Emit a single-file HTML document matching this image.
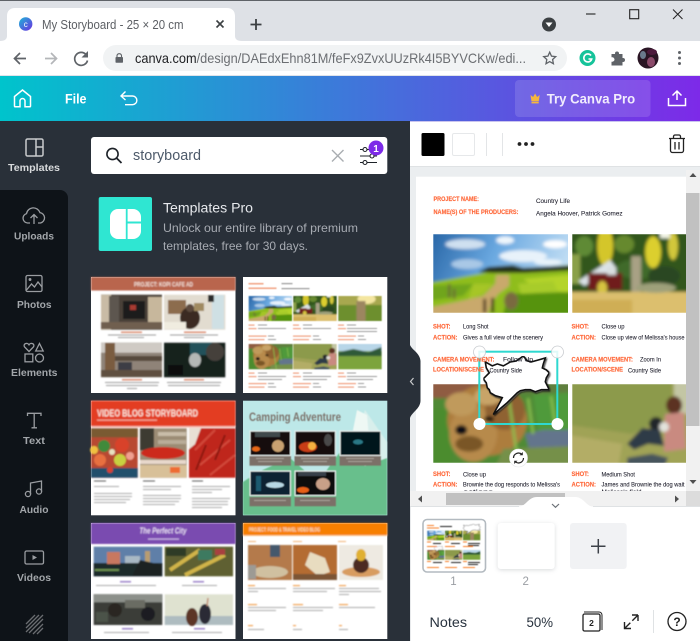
<!DOCTYPE html>
<html><head><meta charset="utf-8"><title>My Storyboard</title>
<style>
html,body{margin:0;padding:0;background:#293039;width:700px;height:641px;overflow:hidden}
svg#r{display:block;filter:blur(.35px)}
text{font-family:"Liberation Sans",sans-serif;white-space:pre}
.n{font-weight:700;font-size:10.5px;fill:#a2a6aa}
.o{font-weight:700;font-size:6.2px;fill:#ff6a3c;stroke:#ff6a3c;stroke-width:.15px}
.k{font-size:6.6px;fill:#1d1d2a;stroke:#1d1d2a;stroke-width:.08px}
</style></head><body>
<svg id="r" xmlns="http://www.w3.org/2000/svg" width="700" height="641" viewBox="0 0 700 641">
<defs>
<linearGradient id="bar" x1="0" x2="1" y1="0" y2="0"><stop offset="0" stop-color="#00c4cc"/><stop offset="1" stop-color="#7d2ae8"/></linearGradient>
<linearGradient id="fav" x1="0" x2="1" y1="0" y2="1"><stop offset="0" stop-color="#1fb6d8"/><stop offset="1" stop-color="#6b2fe0"/></linearGradient>
<linearGradient id="sky" x1="0" x2="1" y1="0" y2=".3"><stop offset="0" stop-color="#1c5a9c"/><stop offset=".5" stop-color="#6aa8e0"/><stop offset="1" stop-color="#c8e2f6"/></linearGradient>
<filter id="b" x="-5%" y="-5%" width="110%" height="110%"><feGaussianBlur stdDeviation="1.7"/></filter>
<filter id="t" x="-5%" y="-5%" width="110%" height="110%"><feGaussianBlur stdDeviation=".7"/></filter>
<filter id="t2" x="-5%" y="-5%" width="110%" height="110%"><feGaussianBlur stdDeviation=".45"/></filter>
<clipPath id="cv"><rect x="416" y="170" width="270" height="321"/></clipPath>

<symbol id="p1" viewBox="0 0 135 79" preserveAspectRatio="none"><g filter="url(#b)">
<rect x="-10" y="-10" width="155" height="99" fill="url(#sky)"/>
<ellipse cx="32" cy="10" rx="20" ry="5" fill="#cfe0f0"/><ellipse cx="72" cy="6" rx="9" ry="4" fill="#eef6fc"/><ellipse cx="90" cy="22" rx="24" ry="6" fill="#e8f2fa"/><ellipse cx="34" cy="30" rx="16" ry="5" fill="#a9c8e6"/><ellipse cx="122" cy="10" rx="12" ry="4" fill="#fff"/><ellipse cx="115" cy="28" rx="14" ry="3" fill="#eaf4fb"/>
<path d="M-10 50 50 39 145 30V89H-10Z" fill="#8fbd1f"/>
<path d="M45 38 55 33 80 31 90 34 145 31V36L90 39H60Z" fill="#25311c"/>
<path d="M90 45 145 40V60L105 55Z" fill="#b4d42c"/><path d="M-10 52 40 50 30 62-10 68Z" fill="#6fa51c"/><path d="M75 60 145 58V89H68Z" fill="#56930f"/><path d="M85 50 120 47 125 58 88 60Z" fill="#a8cc2a"/><path d="M40 50H60L50 60 35 66Z" fill="#a6c628"/>
<path d="M-10 89V75L25 68 50 62 62 50 63 41 76 41 76 52 65 60 58 70 52 89Z" fill="#c9a96c"/>
<ellipse cx="78" cy="67" rx="7" ry="9" fill="#7a6a40"/>
<rect x="50" y="65" width="3" height="14" fill="#46301c"/><rect x="58" y="64" width="3" height="15" fill="#46301c"/><rect x="15" y="50" width="2" height="14" fill="#6d5a3a"/><rect x="20" y="55" width="2" height="10" fill="#6d5a3a"/>
</g></symbol>

<symbol id="p2" viewBox="0 0 114 79" preserveAspectRatio="none"><g filter="url(#b)">
<rect x="-10" y="-10" width="134" height="99" fill="#33561f"/>
<ellipse cx="12" cy="12" rx="9" ry="10" fill="#5f8a36"/><ellipse cx="52" cy="10" rx="10" ry="9" fill="#66892e"/><ellipse cx="66" cy="35" rx="22" ry="10" fill="#3f6a2a"/>
<ellipse cx="33" cy="12" rx="8" ry="20" fill="#d4c62a"/><ellipse cx="81" cy="18" rx="8" ry="16" fill="#dccf2e"/><ellipse cx="101" cy="12" rx="5" ry="14" fill="#d2c73a"/><rect x="88" y="-4" width="10" height="8" fill="#f4f6e8"/>
<rect x="-4" y="20" width="12" height="30" fill="#8aa048"/>
<path d="M6 47 38 26 44 34 12 52Z" fill="#dbe3e8"/>
<rect x="16" y="39" width="34" height="17" fill="#701a1e"/><rect x="35" y="33" width="9" height="8" fill="#d8dee0"/>
<rect x="59" y="22" width="10" height="40" fill="#a8a184"/>
<ellipse cx="30" cy="54" rx="5" ry="7" fill="#d6c440"/><ellipse cx="92" cy="42" rx="16" ry="10" fill="#2a4624"/>
<path d="M-10 58H124V89H-10Z" fill="#dcbf6e"/><path d="M-10 66H60V89H-10Z" fill="#cfae55"/><ellipse cx="84" cy="54" rx="20" ry="5" fill="#9ea07a"/>
</g></symbol>

<symbol id="p3" viewBox="0 0 135 79" preserveAspectRatio="none"><g filter="url(#b)">
<rect x="-10" y="-10" width="155" height="99" fill="#4f8a34"/>
<rect x="-10" y="-10" width="75" height="24" fill="#8f5b43"/><rect x="60" y="-10" width="85" height="20" fill="#5f7f3c"/><path d="M100 10 145 8V48H105Z" fill="#4f9a3a"/><path d="M-10 25H18V89H-10Z" fill="#4c8c2e"/>
<ellipse cx="54" cy="36" rx="40" ry="36" fill="#ad7d3e"/><ellipse cx="40" cy="50" rx="24" ry="28" fill="#b78a4c"/><ellipse cx="72" cy="26" rx="20" ry="20" fill="#8f6230"/><ellipse cx="28" cy="20" rx="16" ry="12" fill="#c09a5c"/><ellipse cx="55" cy="12" rx="14" ry="9" fill="#c8a468"/>
<ellipse cx="56" cy="35" rx="5" ry="3" fill="#2a1c10"/>
<ellipse cx="28" cy="46" rx="6" ry="5" fill="#101116"/><ellipse cx="36" cy="60" rx="14" ry="8" fill="#7a5628"/>
<path d="M92 50 110 46 145 46V72H98Z" fill="#64748c"/><path d="M70 65 145 62V89H60Z" fill="#74904a"/>
<path d="M75 10 85 79M95 14 100 50M118 12 122 40" stroke="#8ac050" stroke-width="2.500"/>
</g></symbol>

<symbol id="p4" viewBox="0 0 114 79" preserveAspectRatio="none"><g filter="url(#b)">
<rect x="-10" y="-10" width="134" height="99" fill="#a0a357"/>
<path d="M-10-10H100V30L60 50-10 40Z" fill="#8c9a4c"/><path d="M-10 50 50 60 45 89H-10Z" fill="#b3ad66"/><rect x="102" y="-10" width="22" height="40" fill="#c3c6a4"/>
<ellipse cx="102" cy="21" rx="8" ry="9" fill="#5c3324"/>
<path d="M93 30 112 28 114 65 92 68Z" fill="#c98a80"/>
<ellipse cx="84" cy="40" rx="7" ry="7" fill="#24262b"/><ellipse cx="92" cy="43" rx="5" ry="5" fill="#e2e2dc"/>
<path d="M55 60 70 44 88 46 92 62 76 60 62 66Z" fill="#2e3a46"/><path d="M55 74 80 70 96 74 90 89H55Z" fill="#46545c"/>
</g></symbol>

<symbol id="p5" viewBox="0 0 43 25" preserveAspectRatio="none"><g filter="url(#t)"><rect x="-4" y="-4" width="51" height="33" fill="#6d8f2f"/><rect x="-4" y="-4" width="51" height="13" fill="#a8a850"/><ellipse cx="28" cy="3" rx="9" ry="5" fill="#f4e6a0"/><rect x="18" y="5" width="9" height="20" fill="#9c8660"/></g></symbol>
<symbol id="p6" viewBox="0 0 43 25" preserveAspectRatio="none"><g filter="url(#t)"><rect x="-4" y="-4" width="51" height="33" fill="#7ba43e"/><rect x="-4" y="-4" width="51" height="11" fill="#b8d6e8"/><path d="M0 8 15 5 30 8 43 3V12H0Z" fill="#2e5a38"/></g></symbol>

<symbol id="bub" viewBox="0 0 66 60" preserveAspectRatio="none"><path d="M2 6 9 10 14 8 20 10 27 6 33 5 40 0 44 5 48 6 55 4 62 2 60 8 59 12 63 14 66 17 63 22 62 26 64 30 66 34 58 34 52 36 47 34 42 34 37 35 34 37 28 43 24 47 10 59 17 46 19 42 12 40 7 37 6 34 4 32 3 27 0 23 3 20 6 17 3 12Z" fill="#fff" stroke="#111" stroke-width="1.600"/></symbol>
</defs>

<!-- chrome -->
<rect width="700" height="76" fill="#fff"/>
<rect width="700" height="41" fill="#dee1e6"/>
<rect width="700" height="1" fill="#5f6368"/>
<path d="M0 41C5 41 7 39 7 36V16C7 11 10 8 15 8H227C232 8 235 11 235 16V36C235 39 237 41 242 41Z" fill="#fff"/>
<circle cx="25.700" cy="24" r="6.700" fill="url(#fav)"/>
<text x="25.700" y="27" font-size="8" fill="#fff" text-anchor="middle">c</text>
<text x="42" y="29" font-size="12.500" fill="#5c5f64" textLength="141.500" lengthAdjust="spacingAndGlyphs">My Storyboard - 25 × 20 cm</text>
<path d="M216.500 20.500l7 7m0-7l-7 7" stroke="#3c4043" stroke-width="1.600" fill="none"/>
<path d="M256 19v11M250.500 24.500h11" stroke="#3c4043" stroke-width="1.800" fill="none"/>
<path d="M586 14h9.500" stroke="#222" stroke-width="1.100"/>
<rect x="629.700" y="9.700" width="9" height="9" fill="none" stroke="#222" stroke-width="1.100"/>
<path d="M673 9.500l9.500 9.500m0-9.500L673 19" stroke="#222" stroke-width="1"/>
<circle cx="549" cy="24.500" r="7" fill="#3c4043"/><path d="M545.500 22.500h7l-3.500 4.500z" fill="#fff"/>

<path d="M26 58.500H15M20 53l-5.500 5.500L20 64" stroke="#5f6368" stroke-width="1.700" fill="none"/>
<path d="M45 58.500h11M51 53l5.500 5.500L51 64" stroke="#b4b6b9" stroke-width="1.700" fill="none"/>
<path d="M86 54.500a6.500 6.500 0 1 0 1.500 6" stroke="#5f6368" stroke-width="1.700" fill="none"/><path d="M88 51v6.500h-6.500z" fill="#5f6368"/>
<rect x="103" y="45" width="464" height="26" rx="13" fill="#f1f3f4"/>
<rect x="115.500" y="57" width="7.500" height="5.800" rx=".8" fill="#5f6368"/><path d="M117 57v-1.500a2.300 2.300 0 0 1 4.500 0V57" stroke="#5f6368" stroke-width="1.100" fill="none"/>
<text x="135" y="63" font-size="14" fill="#6b6e72" textLength="391" lengthAdjust="spacingAndGlyphs"><tspan fill="#202124">canva.com</tspan>/design/DAEdxEhn81M/feFx9ZvxUUzRk4I5BYVCKw/edi...</text>
<path d="M549.700 52.200l1.800 3.900 4.200.5-3.100 2.900.8 4.200-3.700-2.100-3.700 2.100.8-4.200-3.100-2.900 4.200-.5z" fill="none" stroke="#5f6368" stroke-width="1.300"/>
<circle cx="587.500" cy="58" r="8" fill="#15c39a"/>
<path d="M591 55.500a4 4 0 1 0 .7 3.500h-3.200" stroke="#fff" stroke-width="1.600" fill="none"/>
<path d="M611.500 54h3.500v-.5a2 2 0 0 1 4 0v.5h3.500v4h.5a2 2 0 0 1 0 4h-.5v3.500h-11v-3.800h.8a2.200 2.200 0 0 0 0-4.400h-.8z" fill="#5f6368"/>
<circle cx="648" cy="58" r="10.500" fill="#2a1524"/><ellipse cx="651" cy="62" rx="4" ry="5" fill="#8b4a6a"/><ellipse cx="643" cy="55" rx="3" ry="4" fill="#6a7a8c"/><ellipse cx="652" cy="52" rx="5" ry="3" fill="#4c1a3c"/>
<circle cx="679.500" cy="52.500" r="1.500" fill="#5f6368"/><circle cx="679.500" cy="58" r="1.500" fill="#5f6368"/><circle cx="679.500" cy="63.500" r="1.500" fill="#5f6368"/>

<!-- canva top bar -->
<rect y="75" width="700" height="1" fill="#dfe3ea"/>
<rect y="76" width="700" height="45" fill="url(#bar)"/>
<path d="M14.500 106v-9.500L22.500 90l8 6.500V106a.8.8 0 0 1-.8.8h-4.700V101a2.500 2.500 0 0 0-5 0v5.800h-4.700a.8.800 0 0 1-.8-.8z" fill="none" stroke="#fff" stroke-width="1.500"/>
<text x="65" y="103.500" font-size="13.500" font-weight="700" fill="#fff" textLength="21.500" lengthAdjust="spacingAndGlyphs">File</text>
<path d="M121 96h11.500a4.300 4.300 0 0 1 0 8.700H125M125.500 91.500L121 96l4.500 4" fill="none" stroke="#fff" stroke-width="1.400"/>
<rect x="515" y="80" width="135.500" height="37" rx="4" fill="#fff" fill-opacity=".13"/>
<path d="M530.500 95l2.600 2 2-3.500 2 3.500 2.600-2-1 6.500h-7.200z" fill="#f6b73c"/><rect x="531.500" y="102" width="7.200" height="1.400" fill="#f6b73c"/>
<text x="546.700" y="103.500" font-size="13.800" font-weight="700" fill="#f1ecfd" textLength="88.500" lengthAdjust="spacingAndGlyphs">Try Canva Pro</text>
<path d="M668.500 98v7.500h17V98M677 100V91M672.500 95.500l4.500-4.500 4.500 4.500" fill="none" stroke="#fff" stroke-width="1.500"/>

<!-- left panel -->
<rect y="121" width="410" height="520" fill="#293039"/>
<path d="M0 190H60a8 8 0 0 1 8 8V641H0Z" fill="#0e1318"/>
<g fill="none" stroke="#c9cbcd" stroke-width="1.500"><rect x="26" y="139" width="17" height="17" rx="1.500"/><path d="M36 139v17M36 147h7"/></g>
<text class="n" x="8" y="171" style="fill:#d8dadc" textLength="52" lengthAdjust="spacingAndGlyphs">Templates</text>
<path d="M30 223h-2.500a4.800 4.800 0 0 1-1-9.400 7 7 0 0 1 13.500-1 5.300 5.300 0 0 1 .5 10.400H38M34 224v-9M30.500 218l3.500-3.500 3.500 3.500" fill="none" stroke="#9a9da1" stroke-width="1.300"/>
<text class="n" x="14" y="239.500" textLength="40" lengthAdjust="spacingAndGlyphs">Uploads</text>
<g fill="none" stroke="#9a9da1" stroke-width="1.300"><rect x="26" y="275.500" width="16" height="16" rx="1.500"/><path d="M26.500 290l5-6 3 3 3.500-5 4 5"/><circle cx="30" cy="279.500" r=".8" fill="#9a9da1"/></g>
<text class="n" x="17" y="308" textLength="34.500" lengthAdjust="spacingAndGlyphs">Photos</text>
<g fill="none" stroke="#9a9da1" stroke-width="1.300"><path d="M29 351.500l-4.500-4.700c-1.800-2.800 2.800-5 4.500-2 1.700-3 6.300-.8 4.500 2z"/><path d="M39.500 343.500l3.700 7.500h-7.500z"/><rect x="25" y="354" width="7.800" height="7.800"/><circle cx="39.500" cy="358" r="4"/></g>
<text class="n" x="11" y="376" textLength="46.500" lengthAdjust="spacingAndGlyphs">Elements</text>
<path d="M27.500 416v-2.700h13.500v2.700M34.200 413.300v14.500M31.500 427.800h5.500" fill="none" stroke="#9a9da1" stroke-width="1.300"/>
<text class="n" x="23" y="444" textLength="22" lengthAdjust="spacingAndGlyphs">Text</text>
<g fill="none" stroke="#9a9da1" stroke-width="1.300"><circle cx="28" cy="494" r="2.600"/><circle cx="39" cy="491.500" r="2.600"/><path d="M30.500 494v-11l11-2v10.500"/></g>
<text class="n" x="19.500" y="513" textLength="29" lengthAdjust="spacingAndGlyphs">Audio</text>
<rect x="25" y="551" width="18.500" height="13" rx="1.500" fill="none" stroke="#9a9da1" stroke-width="1.300"/><path d="M32.500 555l4.500 2.500-4.500 2.500z" fill="#9a9da1"/>
<text class="n" x="17" y="581" textLength="34" lengthAdjust="spacingAndGlyphs">Videos</text>
<path d="M26 624l9-9M26 628l13-13M26 632l17-17M29 633l14-14M33 634l10-10M37 634l6-6" stroke="#6a6d71" stroke-width="1.300" fill="none"/>

<rect x="91" y="137" width="296.300" height="37" rx="3" fill="#fff"/>
<circle cx="112.500" cy="154" r="5.600" fill="none" stroke="#1d2228" stroke-width="1.600"/><path d="M116.500 158l5 5" stroke="#1d2228" stroke-width="1.800"/>
<text x="133" y="160" font-size="14.500" fill="#4d5a6a" textLength="68" lengthAdjust="spacingAndGlyphs">storyboard</text>
<path d="M332 150l11.500 11.500m0-11.500L332 161.500" stroke="#a9adb1" stroke-width="1.400" fill="none"/>
<g stroke="#1d2228" stroke-width="1.100" fill="none"><path d="M360 149.500h17M360 156h17M360 162.500h17"/><circle cx="365" cy="149.500" r="2" fill="#fff"/><circle cx="372" cy="156" r="2" fill="#fff"/><circle cx="365" cy="162.500" r="2" fill="#fff"/></g>
<circle cx="376" cy="148" r="7.500" fill="#7d2ae8"/><text x="376" y="151.800" font-size="10" font-weight="700" fill="#fff" text-anchor="middle">1</text>

<rect x="98.700" y="197" width="53.300" height="54" rx="2" fill="#2fe6d2"/>
<rect x="110" y="209" width="31" height="30" rx="8" fill="#fff"/><path d="M126.700 209v30" stroke="#2fe6d2" stroke-width="1.800"/><path d="M126.700 222.500H141" stroke="#2fe6d2" stroke-width="2"/>
<text x="163" y="212.500" font-size="14" fill="#e6e8ec" textLength="90" lengthAdjust="spacingAndGlyphs">Templates Pro</text>
<text x="163" y="232" font-size="12" fill="#a7abb2" textLength="195" lengthAdjust="spacingAndGlyphs">Unlock our entire library of premium</text>
<text x="163" y="250" font-size="12" fill="#a7abb2" textLength="145" lengthAdjust="spacingAndGlyphs">templates, free for 30 days.</text>

<!-- T1 -->
<rect x="91" y="277" width="144.500" height="116" fill="#fff"/>
<g filter="url(#t)">
<rect x="91" y="277" width="144.500" height="13.500" fill="#b9654d"/>
<text x="134" y="286.300" font-size="6" font-weight="700" fill="#f4e2da" textLength="59" lengthAdjust="spacingAndGlyphs">PROJECT: KOPI CAFE AD</text>
<rect x="101" y="294.700" width="61" height="35" fill="#4a4038"/><rect x="101" y="294.700" width="10" height="35" fill="#c9bba5"/><rect x="109" y="296" width="10" height="30" fill="#5d5650"/><rect x="123" y="301" width="22" height="18" fill="#1c1a1c"/><rect x="130" y="305" width="6" height="5" fill="#a83a30"/><rect x="148" y="297" width="14" height="30" fill="#c7b79c"/>
<rect x="101" y="322" width="61" height="7" fill="#6f5f50"/>
<rect x="164" y="294.700" width="61.300" height="35" fill="#e2dcd0"/><rect x="168" y="300" width="18" height="14" fill="#8c6c4e"/><ellipse cx="190" cy="318" rx="10" ry="11" fill="#3a2a20"/><ellipse cx="190" cy="308" rx="4" ry="4" fill="#5c4a3e"/><rect x="212" y="295" width="12" height="34" fill="#cfe0e4"/><rect x="164" y="322" width="22" height="7" fill="#f0ece0"/><path d="M208 295h6v7h-6z" fill="#2a2a2a"/><rect x="194" y="303" width="10" height="8" fill="#a08a60"/>
<rect x="101" y="342.700" width="61" height="34.600" fill="#8f8378"/><rect x="101" y="342.700" width="61" height="10" fill="#cfcac4"/><rect x="105" y="343" width="10" height="34" fill="#7a5c40"/><rect x="115" y="356" width="47" height="5" fill="#56483e"/><rect x="118" y="362" width="14" height="15" fill="#3e3e44"/><rect x="101" y="370" width="61" height="7" fill="#5f4f40"/>
<rect x="164" y="342.700" width="61.300" height="34.600" fill="#16201e"/><rect x="190" y="343" width="22" height="12" fill="#21515a"/><ellipse cx="195" cy="360" rx="6" ry="7" fill="#b4b8b6"/><ellipse cx="215" cy="352" rx="9" ry="9" fill="#44403a"/><rect x="168" y="365" width="15" height="10" fill="#0c0f10"/>
<g fill="#d98a70"><rect x="121" y="331.500" width="21" height="1.500"/><rect x="184" y="331.500" width="22" height="1.500"/><rect x="122" y="379" width="20" height="1.500"/><rect x="184" y="379" width="20" height="1.500"/></g>
<g fill="#9a9a9a"><rect x="108" y="334.500" width="48" height="1"/><rect x="118" y="337" width="26" height="1"/><rect x="170" y="334.500" width="48" height="1"/><rect x="184" y="337" width="20" height="1"/><rect x="105" y="382" width="54" height="1"/><rect x="106" y="385" width="52" height="1"/><rect x="127" y="388" width="10" height="1"/><rect x="167" y="382" width="54" height="1"/><rect x="168" y="385" width="52" height="1"/></g>
</g>

<!-- T2 -->
<rect x="243" y="277" width="144.300" height="116" fill="#fff"/>
<g filter="url(#t2)">
<rect x="248.500" y="283" width="15" height="1.500" fill="#f0a080"/><rect x="248.500" y="287.500" width="28" height="1.500" fill="#f0a080"/><rect x="281.500" y="283" width="11" height="1.200" fill="#999"/><rect x="281.500" y="288" width="28" height="1.200" fill="#999"/>
<use href="#p1" x="248.700" y="296" width="43.300" height="25"/><use href="#p2" x="293.300" y="296" width="43.400" height="25"/><use href="#p5" x="338.300" y="296" width="43.400" height="25"/>
<use href="#p3" x="248.700" y="344" width="44" height="25.300"/><use href="#p4" x="293.300" y="344" width="43.400" height="25.300"/><use href="#p6" x="338.300" y="344" width="43.400" height="25.300"/>
<g fill="#f0a080"><rect x="248.500" y="324.500" width="6" height="1.200"/><rect x="248.500" y="328" width="8" height="1.200"/><rect x="248.500" y="335.500" width="18" height="1.200"/><rect x="248.500" y="339" width="16" height="1.200"/><rect x="293" y="324.500" width="6" height="1.200"/><rect x="293" y="328" width="8" height="1.200"/><rect x="293" y="335.500" width="18" height="1.200"/><rect x="293" y="339" width="16" height="1.200"/><rect x="338" y="324.500" width="6" height="1.200"/><rect x="338" y="328" width="8" height="1.200"/><rect x="338" y="335.500" width="18" height="1.200"/><rect x="338" y="339" width="16" height="1.200"/>
<rect x="248.500" y="372.500" width="6" height="1.200"/><rect x="248.500" y="376" width="8" height="1.200"/><rect x="248.500" y="383" width="18" height="1.200"/><rect x="248.500" y="386.500" width="16" height="1.200"/><rect x="293" y="372.500" width="6" height="1.200"/><rect x="293" y="376" width="8" height="1.200"/><rect x="293" y="383" width="18" height="1.200"/><rect x="293" y="386.500" width="16" height="1.200"/><rect x="338" y="372.500" width="6" height="1.200"/><rect x="338" y="376" width="8" height="1.200"/><rect x="338" y="383" width="18" height="1.200"/><rect x="338" y="386.500" width="16" height="1.200"/></g>
<g fill="#9c9c9c"><rect x="258" y="324.500" width="9" height="1"/><rect x="258" y="328" width="28" height="1"/><rect x="268" y="335.500" width="6" height="1"/><rect x="268" y="339" width="8" height="1"/><rect x="303" y="324.500" width="9" height="1"/><rect x="303" y="328" width="28" height="1"/><rect x="313" y="335.500" width="6" height="1"/><rect x="313" y="339" width="8" height="1"/><rect x="347" y="324.500" width="9" height="1"/><rect x="347" y="328" width="30" height="1"/><rect x="347" y="331" width="30" height="1"/><rect x="358" y="335.500" width="6" height="1"/><rect x="358" y="339" width="8" height="1"/>
<rect x="258" y="372.500" width="9" height="1"/><rect x="258" y="376" width="28" height="1"/><rect x="258" y="379" width="24" height="1"/><rect x="268" y="383" width="6" height="1"/><rect x="268" y="386.500" width="8" height="1"/><rect x="303" y="372.500" width="9" height="1"/><rect x="303" y="376" width="28" height="1"/><rect x="303" y="379" width="24" height="1"/><rect x="313" y="383" width="6" height="1"/><rect x="313" y="386.500" width="8" height="1"/><rect x="347" y="372.500" width="9" height="1"/><rect x="347" y="376" width="30" height="1"/><rect x="347" y="379" width="26" height="1"/><rect x="358" y="383" width="6" height="1"/><rect x="358" y="386.500" width="8" height="1"/></g>
</g>

<!-- T3 -->
<rect x="91" y="400.700" width="144.500" height="114.600" fill="#fff"/>
<g filter="url(#t)">
<rect x="91" y="400.700" width="144.500" height="25.300" fill="#e33c24"/><rect x="91" y="426" width="144.500" height="1.500" fill="#f5b5a8"/>
<text x="97" y="416.500" font-size="10.500" font-weight="700" fill="#fbe6dc" textLength="101" lengthAdjust="spacingAndGlyphs">VIDEO BLOG STORYBOARD</text>
<rect x="97" y="419.500" width="60" height="1.300" fill="#f2a898"/>
<rect x="91" y="428.300" width="46.700" height="49.400" fill="#b84830"/><rect x="91" y="428.300" width="46.700" height="9" fill="#7a5a30"/><circle cx="104" cy="446" r="6" fill="#3f8a3a"/><circle cx="122" cy="445" r="7" fill="#d8422c"/><circle cx="100" cy="460" r="6" fill="#e87040"/><circle cx="120" cy="460" r="6" fill="#c8d040"/><rect x="91" y="468" width="46.700" height="9.700" fill="#24506c"/><circle cx="130" cy="456" r="4" fill="#f0a090"/><circle cx="94" cy="450" r="4" fill="#f0c040"/><circle cx="112" cy="452" r="3" fill="#e8e0c0"/><circle cx="110" cy="470" r="3" fill="#d84030"/>
<rect x="140" y="428.300" width="46.700" height="49.400" fill="#9c8c74"/><rect x="140" y="428.300" width="14" height="22" fill="#3d3a30"/><rect x="158" y="432" width="28" height="4" fill="#c8bca8"/><rect x="158" y="440" width="28" height="4" fill="#b8ac98"/><ellipse cx="163" cy="453" rx="22" ry="6" fill="#cc2c1c"/><rect x="140" y="460" width="46" height="4" fill="#e8d8cc"/><rect x="140" y="465" width="46.700" height="12.700" fill="#d8c098"/><rect x="170" y="467" width="10" height="6" fill="#ee6c30"/>
<rect x="189" y="428.300" width="46.500" height="49.400" fill="#bf281e"/><path d="M189 428.300h12l-6 16-6 5z" fill="#e8e0d4"/><path d="M195 450 215 430M200 465 230 440M210 475 235 455" stroke="#d24a3a" stroke-width="2" fill="none"/><path d="M196 470 206 445M215 460 225 435" stroke="#8c1410" stroke-width="2"/>
<g fill="#555"><rect x="94" y="480.500" width="12" height="1"/><rect x="143" y="480.500" width="12" height="1"/><rect x="192" y="480.500" width="11" height="1"/></g>
<g fill="#a8a8a8"><rect x="94" y="486" width="25" height="1"/><rect x="94" y="493" width="38" height="1"/><rect x="94" y="496" width="38" height="1"/><rect x="94" y="499" width="36" height="1"/><rect x="94" y="502" width="32" height="1"/><rect x="143" y="486" width="38" height="1"/><rect x="143" y="489" width="28" height="1"/><rect x="143" y="495" width="38" height="1"/><rect x="143" y="498" width="38" height="1"/><rect x="143" y="501" width="36" height="1"/><rect x="143" y="504" width="32" height="1"/><rect x="192" y="486" width="38" height="1"/><rect x="192" y="489" width="30" height="1"/><rect x="192" y="492" width="20" height="1"/><rect x="192" y="498" width="38" height="1"/><rect x="192" y="501" width="36" height="1"/><rect x="192" y="504" width="36" height="1"/><rect x="192" y="507" width="30" height="1"/></g>
</g>

<!-- T4 -->
<rect x="243" y="400.700" width="144.300" height="114.600" fill="#bde8e8"/>
<g filter="url(#t2)">
<path d="M345 470 365 410 387 442V470Z" fill="#d8efec"/>
<path d="M345 470 357 410 367 415 372 472Z" fill="#eef8f4"/>
<path d="M243 515V482L258 472 290 458 318 482 340 452 365 466 387 458V515H243Z" fill="#68bf8c"/>
<text x="249" y="421" font-size="11.500" font-weight="700" fill="#7c736c" textLength="92" lengthAdjust="spacingAndGlyphs">Camping Adventure</text>
<g fill="#e8f0ee"><rect x="249.500" y="430.500" width="41.500" height="25.500"/><rect x="294.500" y="430.500" width="41.500" height="25.500"/><rect x="339.500" y="430.500" width="41.500" height="25.500"/><rect x="249.500" y="470.500" width="41.500" height="25.500"/><rect x="294.500" y="470.500" width="41.500" height="25.500"/></g>
<rect x="250.500" y="431.700" width="39.500" height="23.300" fill="#14100e"/><ellipse cx="278" cy="446" rx="6" ry="6" fill="#c8a070"/><ellipse cx="256" cy="449" rx="4" ry="2.500" fill="#e86818"/><rect x="255" y="432" width="25" height="5" fill="#40484c"/>
<rect x="295.500" y="431.700" width="39.500" height="23.300" fill="#18100e"/><ellipse cx="308" cy="447" rx="9" ry="5" fill="#c83c14"/><ellipse cx="312" cy="446" rx="4" ry="4" fill="#f4b040"/><ellipse cx="328" cy="440" rx="4" ry="6" fill="#484848"/>
<rect x="340.700" y="431.700" width="39.500" height="23.300" fill="#06141a"/><ellipse cx="358" cy="442" rx="5" ry="2.500" fill="#2c7886"/>
<rect x="250.500" y="471.700" width="39.500" height="23.300" fill="#0a2430"/><ellipse cx="275" cy="485" rx="9" ry="3" fill="#b8d8e4"/><rect x="256" y="476" width="5" height="15" fill="#1c5a70"/>
<rect x="295.500" y="471.700" width="39.500" height="23.300" fill="#100c0e"/><ellipse cx="303" cy="490" rx="6" ry="3" fill="#e86018"/><ellipse cx="323" cy="484" rx="7" ry="6" fill="#c8a088"/><rect x="298" y="472" width="28" height="4" fill="#38404a"/>
<g fill="#7b6f68"><rect x="249.500" y="456" width="41.500" height="9.700"/><rect x="294.500" y="456" width="41.500" height="9.700"/><rect x="339.500" y="456" width="41.500" height="9.700"/><rect x="249.500" y="497" width="41.500" height="9.300"/><rect x="294.500" y="497" width="41.500" height="9.300"/></g>
<g fill="#a8a09a"><rect x="256" y="458" width="28" height="1"/><rect x="258" y="461" width="24" height="1"/><rect x="301" y="458" width="28" height="1"/><rect x="303" y="461" width="24" height="1"/><rect x="346" y="458" width="28" height="1"/><rect x="348" y="461" width="24" height="1"/><rect x="254" y="500" width="32" height="1"/><rect x="300" y="500" width="30" height="1"/></g>
</g>

<!-- T5 -->
<rect x="91" y="523" width="144.500" height="116" fill="#fff"/>
<g filter="url(#t)">
<rect x="91" y="523" width="144.500" height="21" fill="#7a4cb0"/>
<text x="163" y="533.500" font-size="8" font-style="italic" font-weight="700" fill="#e8dcf4" text-anchor="middle" textLength="47" lengthAdjust="spacingAndGlyphs">The Perfect City</text>
<rect x="148" y="538.500" width="31" height="1.200" fill="#cdb8e6"/>
<rect x="93.700" y="546.700" width="68.600" height="29.600" fill="#5f7fa8"/><rect x="93.700" y="563" width="68.600" height="13.300" fill="#1c2a2c"/><rect x="107" y="552" width="13" height="12" fill="#c87860"/><rect x="145" y="551" width="5" height="13" fill="#b89c70"/><rect x="125" y="556" width="15" height="7" fill="#a8b8c4"/><path d="M95 570h24" stroke="#6c9050" stroke-width="2"/><path d="M140 560l22 5v11h-30z" fill="#1a2220"/>
<rect x="164.700" y="546.700" width="68.300" height="29.600" fill="#5f6030"/><path d="M170 570 200 550M185 575 225 555" stroke="#d0b448" stroke-width="4"/><rect x="198" y="550" width="14" height="10" fill="#3c7a60"/><rect x="215" y="549" width="10" height="6" fill="#a84040"/><rect x="166" y="548" width="20" height="8" fill="#2e3a28"/>
<rect x="93.700" y="594.300" width="68.600" height="30.700" fill="#3a3c38"/><rect x="93.700" y="594.300" width="68.600" height="8" fill="#8c908a"/><circle cx="148" cy="614" r="7" fill="#1a1c20"/><circle cx="115" cy="610" r="7" fill="#2a2824"/><rect x="125" y="600" width="20" height="8" fill="#6a6c64"/><rect x="96" y="612" width="12" height="10" fill="#4c5248"/>
<rect x="164.700" y="594.300" width="68.300" height="30.700" fill="#dfe2d0"/><rect x="164.700" y="616" width="68.300" height="9" fill="#aebcc0"/><ellipse cx="192" cy="617" rx="6" ry="9" fill="#5c3428"/><ellipse cx="205" cy="614" rx="6" ry="10" fill="#2c2a34"/><path d="M207 606l1-8" stroke="#c08a70" stroke-width="1.500"/>
<g fill="#9a80c8"><rect x="120" y="581" width="11" height="1.500"/><rect x="193" y="581" width="11" height="1.500"/><rect x="122" y="628" width="11" height="1.500"/><rect x="194" y="628" width="11" height="1.500"/></g>
<g fill="#a8a8a8"><rect x="96" y="585" width="60" height="1"/><rect x="182" y="585" width="35" height="1"/><rect x="104" y="632" width="45" height="1"/><rect x="172" y="632" width="50" height="1"/></g>
</g>

<!-- T6 -->
<rect x="243" y="523" width="144.300" height="116" fill="#fff"/>
<g filter="url(#t)">
<rect x="243" y="523" width="144.300" height="12" fill="#f77f00"/><rect x="243" y="535" width="144.300" height="1" fill="#f8c488"/>
<text x="249" y="531.500" font-size="5" font-weight="700" fill="#fbe6cc" textLength="71" lengthAdjust="spacingAndGlyphs">PROJECT: FOOD &amp; TRAVEL VIDEO BLOG</text>
<rect x="248" y="541" width="8" height="1" fill="#f0b070"/><rect x="293" y="541" width="9" height="1" fill="#f0b070"/><rect x="338" y="541" width="8" height="1" fill="#f0b070"/>
<rect x="248" y="545" width="44" height="35" fill="#b47a4c"/><ellipse cx="270" cy="572" rx="18" ry="6" fill="#d0c0a0"/><rect x="270" y="545" width="10" height="12" fill="#44586c"/><rect x="248" y="565" width="8" height="14" fill="#9c9a94"/>
<rect x="293" y="545" width="44" height="35" fill="#b46c30"/><path d="M310 552 325 558 330 572 318 576 305 565Z" fill="#e8dcc0"/><rect x="293" y="574" width="44" height="6" fill="#7c5434"/>
<rect x="339" y="545" width="44" height="35" fill="#eeeae2"/><ellipse cx="361" cy="572" rx="19" ry="5" fill="#d89c60"/><ellipse cx="361" cy="565" rx="8" ry="8" fill="#4c2c20"/><ellipse cx="361" cy="555" rx="5" ry="6" fill="#e0b030"/>
<g fill="#f0a050"><rect x="248" y="585" width="7" height="1.200"/><rect x="293" y="585" width="7" height="1.200"/><rect x="339" y="585" width="7" height="1.200"/><rect x="248" y="604" width="9" height="1.200"/><rect x="293" y="604" width="10" height="1.200"/><rect x="339" y="604" width="9" height="1.200"/><rect x="248" y="625" width="5" height="1.200"/><rect x="293" y="625" width="3" height="1.200"/><rect x="339" y="625" width="3" height="1.200"/></g>
<g fill="#a8a8a8"><rect x="248" y="588" width="38" height="1"/><rect x="248" y="591" width="10" height="1"/><rect x="293" y="588" width="42" height="1"/><rect x="293" y="591" width="34" height="1"/><rect x="339" y="588" width="40" height="1"/><rect x="339" y="591" width="42" height="1"/><rect x="339" y="594" width="10" height="1"/><rect x="248" y="607" width="38" height="1"/><rect x="248" y="610" width="28" height="1"/><rect x="293" y="607" width="40" height="1"/><rect x="293" y="610" width="30" height="1"/><rect x="339" y="607" width="36" height="1"/><rect x="248" y="629" width="16" height="1"/><rect x="293" y="629" width="9" height="1"/><rect x="339" y="629" width="9" height="1"/></g>
</g>

<!-- right panel -->
<rect x="410" y="121" width="290" height="520" fill="#fff"/>
<rect x="410" y="121" width="290" height="1" fill="#c9c4ef"/>
<rect x="421.500" y="133" width="23" height="23" rx="1.500" fill="#000"/>
<rect x="452.500" y="133.500" width="22" height="22" rx="1.500" fill="#fff" stroke="#e6e8ea"/>
<path d="M486.500 133v23M502.500 133v23" stroke="#e3e5e7"/>
<circle cx="519.500" cy="144" r="1.900" fill="#222"/><circle cx="526" cy="144" r="1.900" fill="#222"/><circle cx="532.500" cy="144" r="1.900" fill="#222"/>
<path d="M669 138.500h16M673.500 138.500v-2a1.500 1.500 0 0 1 1.500-1.500h4a1.500 1.500 0 0 1 1.500 1.500v2M670.500 138.500v12a2 2 0 0 0 2 2h9a2 2 0 0 0 2-2v-12M675 142v7.500M679 142v7.500" fill="none" stroke="#222" stroke-width="1.300"/>
<rect x="410" y="166" width="290" height="341" fill="#ebeef0"/>
<rect x="410" y="166" width="290" height="1" fill="#dfe2e4"/>
<g clip-path="url(#cv)">
<rect x="416" y="176.700" width="270" height="340" fill="#fff"/>
<use href="#p1" x="433.300" y="234.300" width="134.700" height="78.400"/>
<use href="#p2" x="572.300" y="234.300" width="113.700" height="78.400"/>
<use href="#p3" x="433.300" y="384.300" width="134.700" height="78.400"/>
<use href="#p4" x="572.300" y="384.300" width="113.700" height="78.400"/>
</g>
<rect x="479.300" y="351.700" width="78" height="72.300" fill="none" stroke="#2fd8d0" stroke-width="2"/>
<use href="#bub" x="483.300" y="356" width="66" height="59.500" transform="translate(1 1.200)" opacity=".85" style="filter:blur(.7px)"/>
<use href="#bub" x="483.300" y="356" width="66" height="59.500"/>
<g clip-path="url(#cv)">
<text class="o" x="433.500" y="201.200" textLength="45.500" lengthAdjust="spacingAndGlyphs">PROJECT NAME:</text>
<text class="o" x="433.500" y="214" textLength="85" lengthAdjust="spacingAndGlyphs">NAME(S) OF THE PRODUCERS:</text>
<text class="k" x="536" y="203" textLength="34" lengthAdjust="spacingAndGlyphs">Country Life</text>
<text class="k" x="536" y="215.500" textLength="86.500" lengthAdjust="spacingAndGlyphs">Angela Hoover, Patrick Gomez</text>
<text class="o" x="433" y="328.500" textLength="17.500" lengthAdjust="spacingAndGlyphs">SHOT:</text>
<text class="k" x="463" y="328.700" textLength="25.500" lengthAdjust="spacingAndGlyphs">Long Shot</text>
<text class="o" x="433" y="339.500" textLength="24.500" lengthAdjust="spacingAndGlyphs">ACTION:</text>
<text class="k" x="463" y="339.500" textLength="80" lengthAdjust="spacingAndGlyphs">Gives a full view of the scenery</text>
<text class="o" x="571.500" y="328.500" textLength="17.500" lengthAdjust="spacingAndGlyphs">SHOT:</text>
<text class="k" x="601.500" y="328.700" textLength="23" lengthAdjust="spacingAndGlyphs">Close up</text>
<text class="o" x="571.500" y="339.500" textLength="24.500" lengthAdjust="spacingAndGlyphs">ACTION:</text>
<text class="k" x="601.500" y="339.500" textLength="83" lengthAdjust="spacingAndGlyphs">Close up view of Melissa's house</text>
<text class="o" x="433" y="361.500" textLength="61.500" lengthAdjust="spacingAndGlyphs">CAMERA MOVEMENT:</text>
<text class="o" x="433" y="371.500" textLength="51" lengthAdjust="spacingAndGlyphs">LOCATION/SCENE</text>
<text class="k" x="503" y="361.500" textLength="30" lengthAdjust="spacingAndGlyphs">Follow Up</text>
<text class="k" x="489.500" y="372.500" textLength="32.500" lengthAdjust="spacingAndGlyphs">Country Side</text>
<text class="o" x="571.500" y="361.500" textLength="61.500" lengthAdjust="spacingAndGlyphs">CAMERA MOVEMENT:</text>
<text class="o" x="571.500" y="371.500" textLength="51.500" lengthAdjust="spacingAndGlyphs">LOCATION/SCENE</text>
<text class="k" x="640" y="361.500" textLength="21" lengthAdjust="spacingAndGlyphs">Zoom In</text>
<text class="k" x="628" y="372.500" textLength="33" lengthAdjust="spacingAndGlyphs">Country Side</text>
<text class="o" x="433" y="476.200" textLength="17.500" lengthAdjust="spacingAndGlyphs">SHOT:</text>
<text class="k" x="463" y="476.500" textLength="23" lengthAdjust="spacingAndGlyphs">Close up</text>
<text class="o" x="433" y="486.500" textLength="24.500" lengthAdjust="spacingAndGlyphs">ACTION:</text>
<text class="k" x="463" y="486.500" textLength="97" lengthAdjust="spacingAndGlyphs">Brownie the dog responds to Melissa's</text>
<text class="k" x="463" y="494" textLength="30" lengthAdjust="spacingAndGlyphs">actions</text>
<text class="o" x="571.500" y="476.200" textLength="17.500" lengthAdjust="spacingAndGlyphs">SHOT:</text>
<text class="k" x="601.500" y="476.500" textLength="33.500" lengthAdjust="spacingAndGlyphs">Medium Shot</text>
<text class="o" x="571.500" y="486.500" textLength="24.500" lengthAdjust="spacingAndGlyphs">ACTION:</text>
<text class="k" x="601.500" y="486.500" textLength="83" lengthAdjust="spacingAndGlyphs">James and Brownie the dog wait</text>
<text class="k" x="601.500" y="494" textLength="40" lengthAdjust="spacingAndGlyphs">Melissa's field</text>
</g>
<circle cx="479.500" cy="352" r="6" fill="#fff" fill-opacity=".85" stroke="#c9ccd0" stroke-width=".8"/>
<circle cx="557.500" cy="352" r="6" fill="#fff" fill-opacity=".85" stroke="#c9ccd0" stroke-width=".8"/>
<circle cx="479.500" cy="424" r="6" fill="#fff"/><circle cx="557.500" cy="424" r="6" fill="#fff"/>
<circle cx="518.500" cy="458" r="9" fill="#fff" stroke="#e8eaec" stroke-width=".6"/>
<path d="M513.500 458a5 5 0 0 1 8.500-3.500M523.500 458a5 5 0 0 1-8.500 3.500" stroke="#222" stroke-width="1.200" fill="none"/><path d="M522.800 452v3.300h-3.300zM514.200 464v-3.300h3.300z" fill="#222"/>

<!-- left edge handle -->
<path d="M410 345c2 5 10 8 10.500 16v40c-.5 8-8.500 11-10.500 17z" fill="#293039"/>
<path d="M413.500 378l-3 3.500 3 3.500" fill="none" stroke="#c9cbcd" stroke-width="1.200"/>

<!-- scrollbars -->
<rect x="686" y="170" width="14" height="321" fill="#f1f1f1"/>
<rect x="686" y="193" width="13.500" height="233" fill="#c1c1c1"/>
<path d="M689.500 177l3.500-4 3.500 4z" fill="#505050"/>
<path d="M689.500 480l3.500 4 3.500-4z" fill="#505050"/>
<rect x="410" y="491" width="290" height="16" fill="#f1f1f1"/>
<rect x="446" y="493" width="119" height="12" fill="#c1c1c1"/>
<path d="M422 495.500l-4 3.500 4 3.500z" fill="#505050"/>
<path d="M675 495.500l4 3.500-4 3.500z" fill="#505050"/>
<rect x="686" y="491" width="14" height="16" fill="#dcdcdc"/>
<path d="M519 506.500c7 0 9-9.500 18-9.500h38c9 0 11 9.500 18 9.500z" fill="#fff"/>

<!-- pages strip -->
<rect x="410" y="506.500" width="290" height="134.500" fill="#fff"/>
<rect x="410" y="506" width="109" height="1" fill="#dfe2e4"/><rect x="593" y="506" width="107" height="1" fill="#dfe2e4"/>
<path d="M552 504l3.500 3.300 3.500-3.300" stroke="#6b7076" stroke-width="1.200" fill="none"/>
<rect x="410" y="507" width="1" height="134" fill="#e8eaec"/>
<rect x="423" y="519.500" width="62.500" height="52.500" rx="4" fill="#fff" stroke="#b3bac0" stroke-width="1.600"/>
<g filter="url(#t2)">
<use href="#p1" x="427.300" y="530.700" width="17" height="9.500"/><use href="#p2" x="445" y="530.700" width="17.300" height="9.500"/><use href="#p5" x="463" y="530.700" width="17.300" height="9.500"/>
<use href="#p3" x="427.300" y="550" width="17" height="9.700"/><use href="#p4" x="445" y="550" width="17.300" height="9.700"/><use href="#p6" x="463" y="550" width="17.300" height="9.700"/>
<use href="#bub" x="463" y="524" width="17.500" height="10.500"/><use href="#bub" x="434" y="546" width="9" height="6"/>
<g fill="#f77f2c"><rect x="427" y="525" width="7" height="1"/><rect x="427" y="527.500" width="12" height="1"/><rect x="427" y="541.500" width="4" height="1"/><rect x="427" y="546" width="10" height="1"/><rect x="445" y="541.500" width="4" height="1"/><rect x="445" y="546" width="10" height="1"/><rect x="463" y="541.500" width="4" height="1"/><rect x="463" y="546" width="10" height="1"/><rect x="427" y="561" width="4" height="1"/><rect x="427" y="567" width="12" height="1"/><rect x="445" y="561" width="4" height="1"/><rect x="445" y="567" width="12" height="1"/><rect x="463" y="561" width="4" height="1"/><rect x="463" y="567" width="12" height="1"/></g>
<g fill="#222"><rect x="440" y="526" width="12" height="1"/><rect x="433" y="543" width="8" height="1"/><rect x="451" y="543" width="9" height="1"/><rect x="468" y="543" width="12" height="1"/><rect x="468" y="545" width="11" height="1"/><rect x="433" y="562" width="9" height="1"/><rect x="451" y="562" width="10" height="1"/><rect x="468" y="562" width="12" height="1"/><rect x="468" y="564" width="10" height="1"/></g>
</g>
<rect x="497.700" y="523" width="57" height="46" rx="3" fill="#fff" style="filter:drop-shadow(0 1px 2px rgba(40,50,60,.18))"/>
<rect x="570" y="523" width="56.700" height="46" rx="3" fill="#f1f2f4"/>
<path d="M598.300 539v14.500M591 546.200h14.500" stroke="#3d4148" stroke-width="1.500"/>
<text x="453.500" y="585" font-size="11.500" fill="#9a9ea3" text-anchor="middle">1</text>
<text x="525.700" y="585" font-size="11.500" fill="#9a9ea3" text-anchor="middle">2</text>
<text x="429.500" y="627" font-size="14" fill="#28323e" textLength="37.500" lengthAdjust="spacingAndGlyphs">Notes</text>
<text x="526.500" y="627" font-size="13.500" fill="#28323e" textLength="26.500" lengthAdjust="spacingAndGlyphs">50%</text>
<rect x="583" y="614" width="17" height="17" rx="1.500" fill="#fff" stroke="#222" stroke-width="1.300"/>
<path d="M584 612h15a3 3 0 0 1 3 3v15" fill="none" stroke="#222" stroke-width="1"/>
<text x="591.500" y="626" font-size="8.500" font-weight="700" fill="#222" text-anchor="middle">2</text>
<path d="M624.500 622v6.500h6.500M624.800 628.200l5.500-5.500M638 615h-6M638 615v6M637.800 615.200l-5.500 5.500" fill="none" stroke="#222" stroke-width="1.400"/>
<path d="M653.500 610v23" stroke="#dfe2e4"/>
<circle cx="677" cy="621.500" r="9" fill="none" stroke="#222" stroke-width="1.300"/>
<text x="677" y="626" font-size="12" font-weight="700" fill="#222" text-anchor="middle">?</text>
</svg>
</body></html>
